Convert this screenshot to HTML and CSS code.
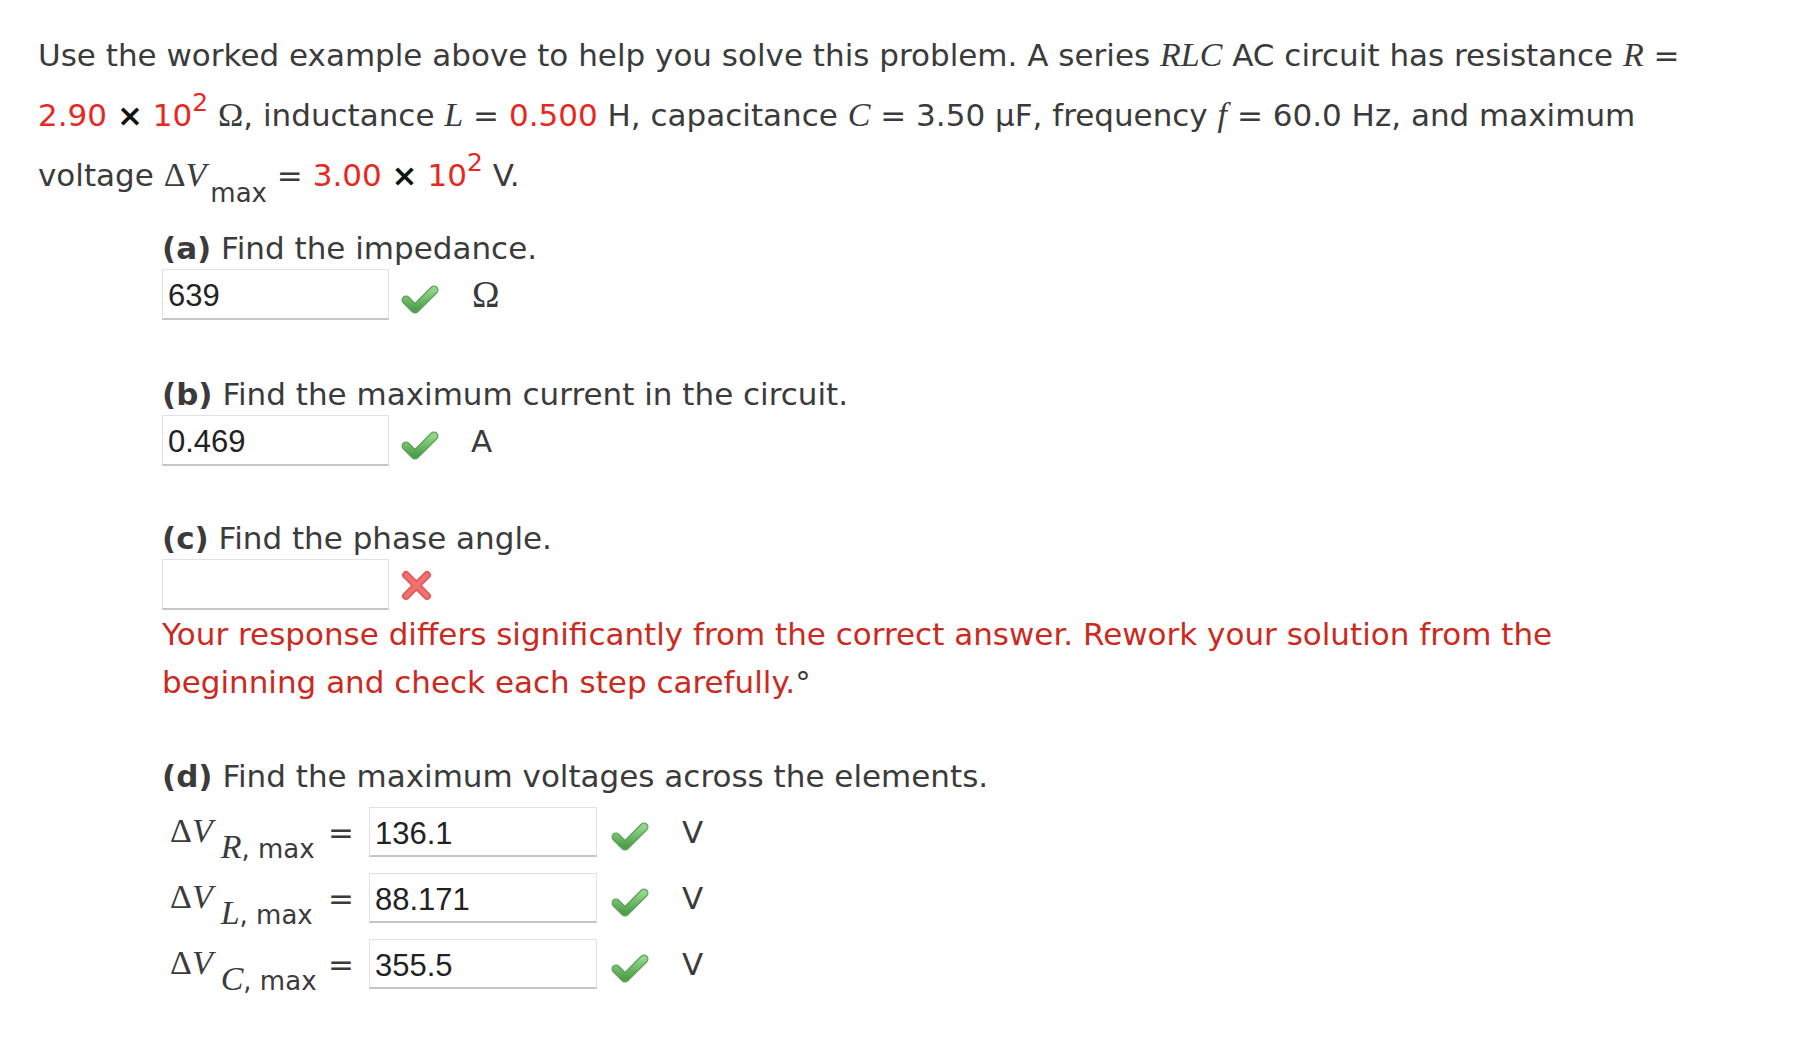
FILE: index.html
```html
<!DOCTYPE html>
<html lang="en">
<head>
<meta charset="utf-8">
<title>Series RLC circuit</title>
<link rel="stylesheet" href="styles.css">
</head>
<body>
<svg class="defs" width="0" height="0" aria-hidden="true">
  <defs>
    <linearGradient id="chk-grad" x1="0" y1="0" x2="0" y2="1">
      <stop offset="0" stop-color="#93d58d"/>
      <stop offset="1" stop-color="#4f9e4a"/>
    </linearGradient>
    <symbol id="chk" viewBox="0 0 38 29">
      <path d="M5 15 L14 24 L33 5" fill="none" stroke="#5aa255" stroke-width="9" stroke-linecap="round" stroke-linejoin="round"/>
      <path d="M5 15 L14 24 L33 5" fill="none" stroke="url(#chk-grad)" stroke-width="6.5" stroke-linecap="round" stroke-linejoin="round"/>
    </symbol>
    <symbol id="cross" viewBox="0 0 31 31">
      <path d="M5 5 L26 26 M26 5 L5 26" fill="none" stroke="#e55c5c" stroke-width="8" stroke-linecap="round"/>
      <path d="M5 5 L26 26 M26 5 L5 26" fill="none" stroke="#ef7272" stroke-width="4" stroke-linecap="round"/>
    </symbol>
  </defs>
</svg>

<div class="page">
  <p class="intro">Use the worked example above to help you solve this problem. A series <i class="m">RLC</i> AC circuit has resistance <i class="m">R</i> =<br><span class="red">2.90</span> <b class="times">×</b> <span class="red">10<sup>2</sup></span> <span class="m">Ω</span>, inductance <i class="m">L</i> = <span class="red">0.500</span> H, capacitance <i class="m">C</i> = 3.50 µF, frequency <i class="m">f</i> = 60.0 Hz, and maximum<br>voltage <span class="m">Δ<i>V</i></span><sub>max</sub> = <span class="red">3.00</span> <b class="times">×</b> <span class="red">10<sup>2</sup></span> V.</p>

  <div class="parts">
    <section class="part part-first">
      <div class="q"><b>(a)</b> Find the impedance.</div>
      <div class="answer">
        <div class="field">639</div>
        <svg class="ico check"><use href="#chk"/></svg>
        <span class="unit m">Ω</span>
      </div>
    </section>

    <section class="part">
      <div class="q"><b>(b)</b> Find the maximum current in the circuit.</div>
      <div class="answer">
        <div class="field">0.469</div>
        <svg class="ico check"><use href="#chk"/></svg>
        <span class="unit">A</span>
      </div>
    </section>

    <section class="part part-feedback">
      <div class="q"><b>(c)</b> Find the phase angle.</div>
      <div class="answer">
        <div class="field"></div>
        <svg class="ico cross"><use href="#cross"/></svg>
      </div>
      <p class="error">Your response differs significantly from the correct answer. Rework your solution from the<br>beginning and check each step carefully.<span class="deg">°</span></p>
    </section>

    <section class="part">
      <div class="q"><b>(d)</b> Find the maximum voltages across the elements.</div>
      <div class="rows">
        <div class="row">
          <span class="lbl"><span class="m">Δ<i>V</i></span><sub><i class="m">R</i>, max</sub></span>
          <span class="eq">=</span>
          <div class="field wide">136.1</div>
          <svg class="ico check"><use href="#chk"/></svg>
          <span class="unit">V</span>
        </div>
        <div class="row">
          <span class="lbl"><span class="m">Δ<i>V</i></span><sub><i class="m">L</i>, max</sub></span>
          <span class="eq">=</span>
          <div class="field wide">88.171</div>
          <svg class="ico check"><use href="#chk"/></svg>
          <span class="unit">V</span>
        </div>
        <div class="row">
          <span class="lbl"><span class="m">Δ<i>V</i></span><sub><i class="m">C</i>, max</sub></span>
          <span class="eq">=</span>
          <div class="field wide">355.5</div>
          <svg class="ico check"><use href="#chk"/></svg>
          <span class="unit">V</span>
        </div>
      </div>
    </section>
  </div>
</div>
</body>
</html>
```

FILE: styles.css
```css
html, body {
  margin: 0;
  background: #ffffff;
}

body {
  color: #3b3b3b;
  font-family: "DejaVu Sans", Verdana, sans-serif;
  font-size: 31px;
}

.defs {
  position: absolute;
  width: 0;
  height: 0;
  overflow: hidden;
}

.page {
  padding: 25px 0 0 38px;
}

.intro {
  margin: 0;
  line-height: 60px;
  white-space: nowrap;
}

.m {
  font-family: "Liberation Serif", "Times New Roman", serif;
  font-size: 34px;
}

.intro .m,
.intro sub,
.intro sup {
  line-height: 0;
}

.red {
  color: #e8281f;
}

.times {
  color: #111111;
  font-weight: bold;
}

sup {
  font-size: 25px;
  line-height: 0;
  vertical-align: 15px;
}

sub {
  font-size: 26px;
  line-height: 0;
  vertical-align: -16px;
  margin-left: 4px;
}

.parts {
  margin: 22px 0 0 124px;
}

.part {
  margin-bottom: 51px;
}

.part-first {
  margin-bottom: 53px;
}

.part-feedback {
  margin-bottom: 49px;
}

.q {
  line-height: 42px;
  white-space: nowrap;
}

.q b {
  font-weight: bold;
}

.answer {
  display: flex;
  align-items: center;
  height: 51px;
}

.field {
  box-sizing: border-box;
  width: 227px;
  height: 51px;
  padding: 3px 5px 0;
  line-height: 46px;
  border: 1px solid #e2e2e2;
  border-bottom: 2px solid #c6c6c6;
  background: #ffffff;
  color: #222222;
  font-family: "Liberation Sans", Arial, sans-serif;
  font-size: 31px;
  white-space: nowrap;
}

.field.wide {
  width: 228px;
  height: 50px;
}

.ico {
  flex: none;
  display: block;
}

.check {
  width: 38px;
  height: 29px;
  margin: 9px 0 0 12px;
}

.cross {
  width: 31px;
  height: 31px;
  margin: 2px 0 0 12px;
}

.unit {
  margin-left: 32px;
}

.answer .unit.m {
  margin-left: 33px;
  font-size: 37px;
}

.error {
  margin: 0;
  line-height: 48px;
  color: #cc2a20;
  white-space: nowrap;
}

.deg {
  color: #3b3b3b;
}

.rows {
  display: flex;
  flex-direction: column;
  gap: 16px;
  margin-top: 10px;
}

.row {
  display: flex;
  align-items: center;
  height: 50px;
}

.lbl {
  box-sizing: border-box;
  width: 166px;
  padding: 0 0 1px 8px;
  white-space: nowrap;
  line-height: 1;
}

.lbl sub {
  margin-left: 8px;
}

.eq {
  width: 19px;
  margin-right: 22px;
}

.row .check {
  margin-left: 14px;
}

.row .unit {
  margin-left: 33px;
}
```
